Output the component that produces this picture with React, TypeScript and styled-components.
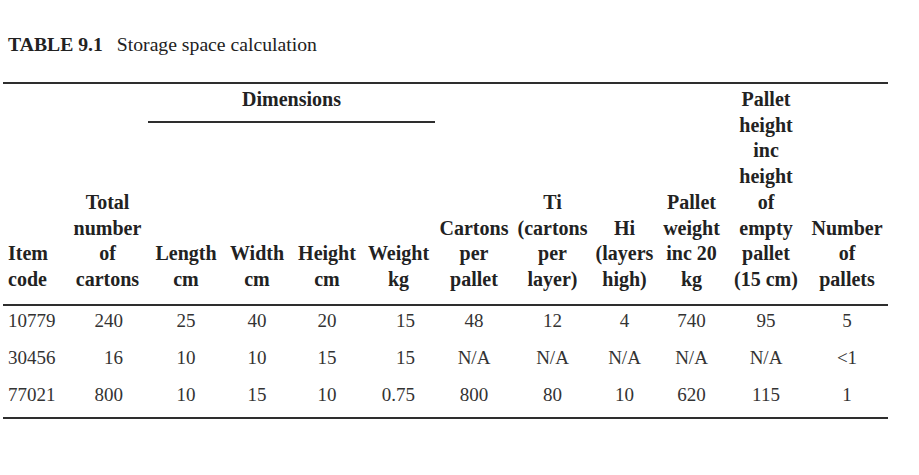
import styled, { createGlobalStyle } from 'styled-components';

const GlobalStyle = createGlobalStyle`
  html, body {
    margin: 0;
    padding: 0;
    background: #ffffff;
  }
  body {
    font-family: "Liberation Serif", "Times New Roman", serif;
    color: #1c1c1c;
  }
`;

const COLUMNS = '62px 85px 72px 70px 70px 73px 78px 79px 65px 69px 80px 82px';

const Page = styled.div`
  padding: 33px 0 40px 3px;
  width: 885px;
`;

const Caption = styled.div`
  padding-left: 5px;
  font-size: 19.7px;
  line-height: 23px;
  margin-bottom: 26px;
  color: #222;
`;

const CaptionLabel = styled.span`
  font-weight: bold;
  margin-right: 14px;
`;

const Table = styled.div`
  width: 885px;
  border-top: 2px solid #2e2e2e;
  border-bottom: 2px solid #2e2e2e;
`;

const Head = styled.div`
  display: grid;
  grid-template-columns: ${COLUMNS};
  grid-template-rows: 39px auto;
  border-bottom: 2px solid #2e2e2e;
`;

const HeadCell = styled.div<{ $col: string; $row: string; $align?: 'left' | 'center' }>`
  grid-column: ${(p) => p.$col};
  grid-row: ${(p) => p.$row};
  display: flex;
  flex-direction: column;
  justify-content: flex-end;
  align-items: ${(p) => (p.$align === 'left' ? 'flex-start' : 'center')};
  padding: 3px 0 11px ${(p) => (p.$align === 'left' ? '5px' : '0')};
  font-size: 20px;
  font-weight: bold;
  line-height: 25.7px;
  text-align: ${(p) => p.$align ?? 'center'};
  white-space: nowrap;
  color: #222;
`;

const GroupCell = styled.div`
  grid-column: 3 / 7;
  grid-row: 1;
  padding-top: 3px;
  font-size: 20px;
  font-weight: bold;
  line-height: 25.7px;
  text-align: center;
  color: #222;
  border-bottom: 2px solid #2e2e2e;
  margin-left: -2px;
`;

const Body = styled.div`
  display: grid;
  grid-template-columns: ${COLUMNS};
  grid-auto-rows: 37px;
`;

const Cell = styled.div<{ $align?: 'left' | 'center' | 'right'; $pad?: number }>`
  padding: 2px ${(p) => (p.$align === 'right' ? p.$pad ?? 0 : 0)}px 0
    ${(p) => (p.$align === 'left' ? p.$pad ?? 0 : 0)}px;
  font-size: 19px;
  line-height: 25px;
  text-align: ${(p) => p.$align ?? 'center'};
  color: #333;
  white-space: nowrap;
`;

const headers: { col: string; lines: string[]; align?: 'left' | 'center'; row2?: boolean }[] = [
  { col: '1', lines: ['Item', 'code'], align: 'left' },
  { col: '2', lines: ['Total', 'number', 'of', 'cartons'] },
  { col: '3', lines: ['Length', 'cm'], row2: true },
  { col: '4', lines: ['Width', 'cm'], row2: true },
  { col: '5', lines: ['Height', 'cm'], row2: true },
  { col: '6', lines: ['Weight', 'kg'], row2: true },
  { col: '7', lines: ['Cartons', 'per', 'pallet'] },
  { col: '8', lines: ['Ti', '(cartons', 'per', 'layer)'] },
  { col: '9', lines: ['Hi', '(layers', 'high)'] },
  { col: '10', lines: ['Pallet', 'weight', 'inc 20', 'kg'] },
  {
    col: '11',
    lines: ['Pallet', 'height', 'inc', 'height', 'of', 'empty', 'pallet', '(15 cm)'],
  },
  { col: '12', lines: ['Number', 'of', 'pallets'] },
];

const rows = [
  ['10779', '240', '25', '40', '20', '15', '48', '12', '4', '740', '95', '5'],
  ['30456', '16', '10', '10', '15', '15', 'N/A', 'N/A', 'N/A', 'N/A', 'N/A', '<1'],
  ['77021', '800', '10', '15', '10', '0.75', '800', '80', '10', '620', '115', '1'],
];

// alignment per column for the body cells
const bodyAlign: { align: 'left' | 'center' | 'right'; pad?: number }[] = [
  { align: 'left', pad: 5 },
  { align: 'right', pad: 27 },
  { align: 'center' },
  { align: 'center' },
  { align: 'center' },
  { align: 'right', pad: 20 },
  { align: 'center' },
  { align: 'center' },
  { align: 'center' },
  { align: 'center' },
  { align: 'center' },
  { align: 'center' },
];

const App = () => {
  return (
    <Page>
      <GlobalStyle />
      <Caption>
        <CaptionLabel>TABLE 9.1</CaptionLabel>Storage space calculation
      </Caption>
      <Table>
        <Head>
          <GroupCell>Dimensions</GroupCell>
          {headers.map((h) => (
            <HeadCell
              key={h.col}
              $col={h.col}
              $row={h.row2 ? '2' : '1 / 3'}
              $align={h.align}
            >
              {h.lines.map((l) => (
                <span key={l + h.col}>{l}</span>
              ))}
            </HeadCell>
          ))}
        </Head>
        <Body>
          {rows.map((r, i) =>
            r.map((v, j) => (
              <Cell key={`${i}-${j}`} $align={bodyAlign[j].align} $pad={bodyAlign[j].pad}>
                {v}
              </Cell>
            ))
          )}
        </Body>
      </Table>
    </Page>
  );
};

export default App;
